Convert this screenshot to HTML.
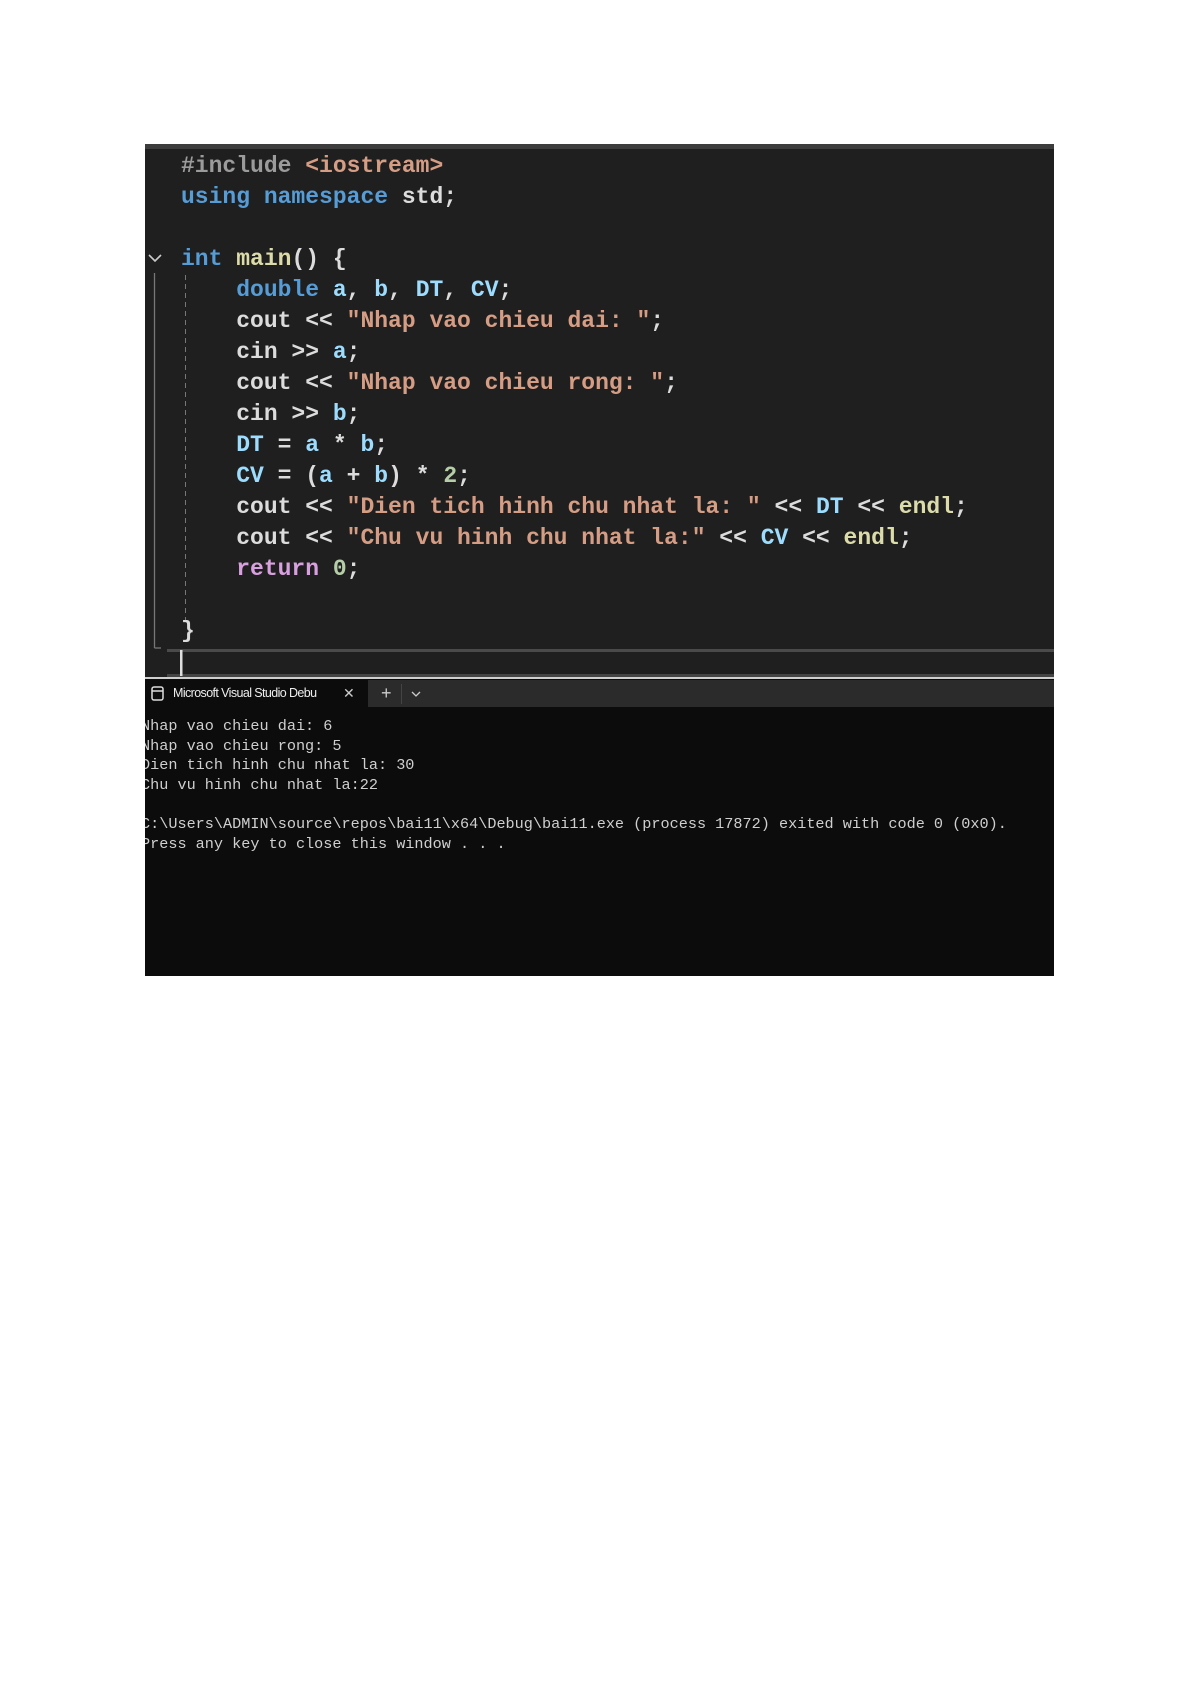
<!DOCTYPE html>
<html><head><meta charset="utf-8"><style>
body{margin:0;width:1200px;height:1696px;background:#fff;position:relative;overflow:hidden}
#box{position:absolute;left:145px;top:144px;width:909px;height:832px;background:#1f1f1f;overflow:hidden}
#topb{position:absolute;left:0;top:0;width:909px;height:5px;background:#3d3d3d}
pre{margin:0;position:absolute;left:36px;top:7px;font-family:"Liberation Mono",monospace;font-size:23px;line-height:31px;color:#dcdcdc;font-weight:bold}
.k{color:#569cd6}.s{color:#d69d85}.g{color:#9b9b9b}.f{color:#dcdcaa}.v{color:#9cdcfe}.r{color:#d8a0df}.n{color:#b5cea8}
#term{position:absolute;left:0;top:535px;width:909px;height:297px;background:#0c0c0c}
#tabbar{position:absolute;left:0;top:1px;width:909px;height:27px;background:#2b2b2b}
#tab{position:absolute;left:0;top:0;width:223px;height:28px;background:#0c0c0c}
.tt{position:absolute;font-family:"Liberation Sans",sans-serif;font-size:12.5px;color:#eee;letter-spacing:-0.6px}
#out{position:absolute;left:-4px;top:38px;margin:0;font-family:"Liberation Mono",monospace;font-size:15.2px;line-height:19.6px;color:#cfcfcf;white-space:pre;font-weight:normal}
</style></head><body>
<div id="box">
<div id="topb"></div>
<svg style="position:absolute;left:0;top:0" width="909" height="535">
<path d="M4 111 L10 117 L16 111" stroke="#ccc" stroke-width="1.6" fill="none"/>
<line x1="9.5" y1="129" x2="9.5" y2="504" stroke="#777" stroke-width="1.3"/>
<line x1="9.5" y1="504" x2="16" y2="504" stroke="#777" stroke-width="1.3"/>
<line x1="40.5" y1="131" x2="40.5" y2="478" stroke="#777" stroke-width="1" stroke-dasharray="5,4"/>
<rect x="22" y="505" width="887" height="3" fill="#4a4a4a"/>
<rect x="22" y="530" width="887" height="3" fill="#444"/>
<rect x="35" y="506" width="2.5" height="26" fill="#ddd"/>
<rect x="0" y="533" width="909" height="2" fill="#cfcfcf"/>
</svg>
<pre><span class="g">#include</span> <span class="s">&lt;iostream&gt;</span>
<span class="k">using</span> <span class="k">namespace</span> std;

<span class="k">int</span> <span class="f">main</span>() {
    <span class="k">double</span> <span class="v">a</span>, <span class="v">b</span>, <span class="v">DT</span>, <span class="v">CV</span>;
    cout &lt;&lt; <span class="s">"Nhap vao chieu dai: "</span>;
    cin &gt;&gt; <span class="v">a</span>;
    cout &lt;&lt; <span class="s">"Nhap vao chieu rong: "</span>;
    cin &gt;&gt; <span class="v">b</span>;
    <span class="v">DT</span> = <span class="v">a</span> * <span class="v">b</span>;
    <span class="v">CV</span> = (<span class="v">a</span> + <span class="v">b</span>) * <span class="n">2</span>;
    cout &lt;&lt; <span class="s">"Dien tich hinh chu nhat la: "</span> &lt;&lt; <span class="v">DT</span> &lt;&lt; <span class="f">endl</span>;
    cout &lt;&lt; <span class="s">"Chu vu hinh chu nhat la:"</span> &lt;&lt; <span class="v">CV</span> &lt;&lt; <span class="f">endl</span>;
    <span class="r">return</span> <span class="n">0</span>;

}</pre>
<div id="term">
<div id="tabbar"><div id="tab"></div>
<svg style="position:absolute;left:6px;top:6px" width="14" height="16"><rect x="1" y="1" width="11" height="13" rx="2" fill="none" stroke="#ddd" stroke-width="1.5"/><line x1="1" y1="5" x2="12" y2="5" stroke="#ddd" stroke-width="1.5"/></svg>
<div class="tt" style="left:28px;top:6px">Microsoft Visual Studio Debu</div>
<div class="tt" style="left:198px;top:5px;font-size:14px;color:#ccc">✕</div>
<div class="tt" style="left:236px;top:3px;font-size:18px;color:#ccc">+</div>
<div style="position:absolute;left:256px;top:4px;width:1px;height:20px;background:#444"></div>
<svg style="position:absolute;left:266px;top:10px" width="10" height="8"><path d="M1 2 L5 6 L9 2" stroke="#ccc" stroke-width="1.3" fill="none"/></svg>
</div>
<pre id="out">Nhap vao chieu dai: 6
Nhap vao chieu rong: 5
Dien tich hinh chu nhat la: 30
Chu vu hinh chu nhat la:22

C:\Users\ADMIN\source\repos\bai11\x64\Debug\bai11.exe (process 17872) exited with code 0 (0x0).
Press any key to close this window . . .</pre>
</div>
</div>
</body></html>
